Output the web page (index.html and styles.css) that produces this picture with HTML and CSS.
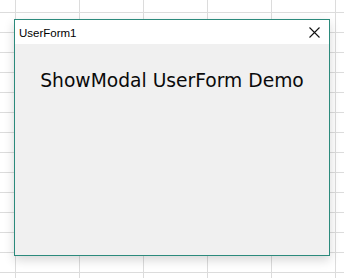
FILE: index.html
```html
<!DOCTYPE html>
<html>
<head>
<meta charset="utf-8">
<link rel="stylesheet" href="styles.css">
</head>
<body>
<div class="sheet">
  <div class="form">
    <div class="titlebar">
      <span class="title">UserForm1</span>
      <span class="close" aria-label="Close">
        <svg width="11" height="11" viewBox="0 0 11 11"><path d="M0.5 0.5 L10.5 10.5 M10.5 0.5 L0.5 10.5" stroke="#111" stroke-width="1.1" fill="none"/></svg>
      </span>
    </div>
    <div class="client">
      <div class="heading">ShowModal UserForm Demo</div>
    </div>
  </div>
</div>
</body>
</html>
```
FILE: styles.css
```css
html, body {
  margin: 0;
  padding: 0;
}
body {
  width: 344px;
  height: 278px;
  overflow: hidden;
  background-color: #ffffff;
  background-image:
    linear-gradient(to right, #dcdcdc 1px, transparent 1px),
    linear-gradient(to bottom, #dcdcdc 1px, transparent 1px);
  background-size: 64px 100%, 100% 20px;
  background-position: 15px 0, 0 12px;
}
.sheet {
  padding: 19px 0 0 14px;
}
.form {
  width: 314px;
  height: 235px;
  border: 1px solid #2b8a7c;
  background: #f0f0f0;
  display: flex;
  flex-direction: column;
  box-shadow: 0 4px 10px rgba(0, 0, 0, 0.16);
}
.titlebar {
  height: 24px;
  background: #ffffff;
  display: flex;
  align-items: center;
  justify-content: space-between;
  padding: 0 9px 0 4px;
}
.title {
  font-family: "Liberation Sans", Arial, sans-serif;
  font-size: 11.5px;
  color: #000;
  padding-top: 2px;
}
.close {
  display: flex;
  width: 11px;
  height: 11px;
}
.client {
  flex: 1;
  padding-top: 26px;
}
.heading {
  font-family: "DejaVu Sans", Verdana, sans-serif;
  font-size: 18.7px;
  line-height: 22px;
  color: #0a0a0a;
  text-align: center;
}
```
